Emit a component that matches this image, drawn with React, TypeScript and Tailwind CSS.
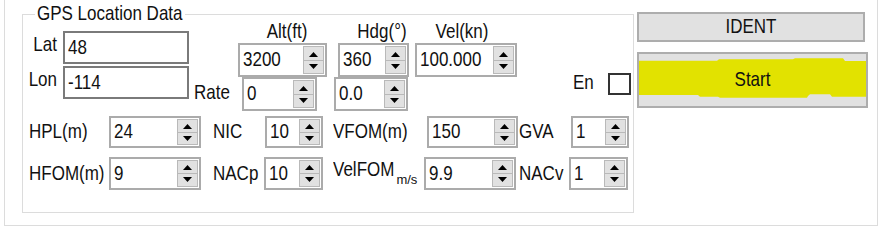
import React from 'react';

function T({ children }: { children: React.ReactNode }) {
  return <span className="inline-block scale-y-115 whitespace-nowrap">{children}</span>;
}

function Arrow({ up }: { up?: boolean }) {
  return (
    <svg width="9" height="5" viewBox="0 0 9 5" className="block">
      <polygon points={up ? '4.5,0 9,5 0,5' : '0,0 9,0 4.5,5'} fill="#000" />
    </svg>
  );
}

function Spin({ value, className }: { value: string; className: string }) {
  return (
    <div className={`flex shrink-0 border-2 border-[#ababab] bg-white p-px ${className}`}>
      <div className="flex flex-1 items-center overflow-hidden pl-[2px]">
        <T>{value}</T>
      </div>
      <div className="flex w-[21px] flex-col">
        <div className="flex flex-1 items-end justify-center border border-[#b9b9b9] bg-[#e1e1e1] pb-[3px]">
          <Arrow up />
        </div>
        <div className="flex flex-1 items-start justify-center border border-t-0 border-[#b9b9b9] bg-[#e1e1e1] pt-[3px]">
          <Arrow />
        </div>
      </div>
    </div>
  );
}

function Label({ children, className }: { children: React.ReactNode; className: string }) {
  return (
    <div className={`shrink-0 ${className}`}>
      <T>{children}</T>
    </div>
  );
}

export default function App() {
  return (
    <div className="h-[227px] w-[878px] overflow-hidden bg-white font-['Liberation_Sans',Arial,sans-serif] text-[17px] leading-[18px] text-[#111]">
      <div className="ml-[4px] flex h-[226px] w-[874px] border-x border-b border-[#dcdcdc]">
        {/* GPS group box */}
        <div className="relative ml-[17px] mt-[14px] h-[199px] w-[612px] shrink-0 border border-[#dcdcdc]">
          <div className="absolute -top-[11px] left-[12px] bg-white px-[2px] leading-[20px]">
            <T>GPS Location Data</T>
          </div>

          <div className="flex">
            {/* Lat / Lon */}
            <div className="ml-[2px] mt-[16px] flex w-[164px] flex-col gap-[2px]">
              <div className="flex items-center justify-end">
                <div className="mb-[5px]">
                  <T>Lat</T>
                </div>
                <div className="ml-[6px] flex h-[33px] w-[126px] items-center border-2 border-[#7a7a7a] pl-[3px]">
                  <T>48</T>
                </div>
              </div>
              <div className="flex items-center justify-end">
                <div className="mb-[5px]">
                  <T>Lon</T>
                </div>
                <div className="ml-[6px] flex h-[33px] w-[126px] items-center border-2 border-[#7a7a7a] pl-[3px]">
                  <T>-114</T>
                </div>
              </div>
            </div>

            {/* Alt / Hdg / Vel */}
            <div className="ml-[3px] flex flex-col">
              <div className="mt-[8px] flex h-[18px]">
                <Label className="ml-[60px] w-[70px] text-center">Alt(ft)</Label>
                <Label className="ml-[25px] w-[70px] text-center">Hdg(°)</Label>
                <Label className="ml-[10px] w-[70px] text-center">Vel(kn)</Label>
              </div>
              <div className="mt-[2px] flex">
                <Spin value="3200" className="ml-[46px] h-[34px] w-[89px]" />
                <Spin value="360" className="ml-[11px] h-[34px] w-[71px]" />
                <Spin value="100.000" className="ml-[6px] h-[34px] w-[102px]" />
              </div>
              <div className="flex items-start">
                <Label className="ml-[2px] mt-[7px] w-[48px]">Rate</Label>
                <Spin value="0" className="h-[34px] w-[75px]" />
                <Spin value="0.0" className="ml-[17px] h-[34px] w-[74px]" />
                <Label className="-mt-[3px] ml-[165px] w-[35px]">En</Label>
                <div className="-mt-[4px] h-[22px] w-[23px] shrink-0 border-2 border-[#333]" />
              </div>
            </div>
          </div>

          {/* HPL / NIC / VFOM / GVA */}
          <div className="mt-[5px] flex h-[32px] items-center">
            <Label className="ml-[6px] w-[80px]">HPL(m)</Label>
            <Spin value="24" className="h-[32px] w-[92px]" />
            <Label className="ml-[12px] w-[52px]">NIC</Label>
            <Spin value="10" className="h-[32px] w-[58px]" />
            <Label className="ml-[10px] w-[94px]">VFOM(m)</Label>
            <Spin value="150" className="h-[32px] w-[91px]" />
            <Label className="ml-[1px] w-[52px]">GVA</Label>
            <Spin value="1" className="h-[32px] w-[58px]" />
          </div>

          {/* HFOM / NACp / VelFOM / NACv */}
          <div className="mt-[9px] flex h-[33px] items-center">
            <Label className="ml-[6px] w-[80px]">HFOM(m)</Label>
            <Spin value="9" className="h-[33px] w-[92px]" />
            <Label className="ml-[12px] w-[51px]">NACp</Label>
            <Spin value="10" className="h-[33px] w-[59px]" />
            <div className="ml-[10px] w-[91px] shrink-0 whitespace-nowrap">
              <T>VelFOM</T>
              <span className="ml-[2px] inline-block align-[-9px] text-[13px] leading-[13px]">m/s</span>
            </div>
            <Spin value="9.9" className="h-[33px] w-[92px]" />
            <Label className="ml-[3px] w-[50px]">NACv</Label>
            <Spin value="1" className="h-[33px] w-[59px]" />
          </div>
        </div>

        {/* Buttons */}
        <div className="ml-[3px] mt-[12px] flex flex-col">
          <div className="flex h-[30px] w-[228px] items-center justify-center border-2 border-[#adadad] bg-[#e1e1e1]">
            <T>IDENT</T>
          </div>
          <div className="relative mt-[10px] flex h-[56px] w-[231px] items-center justify-center border-2 border-[#adadad] bg-[#e1e1e1]">
            <svg className="absolute left-0 top-0" width="227" height="52" viewBox="0 0 227 52">
              <polygon
                fill="#e2e200"
                points="0,6.7 78,6.7 80,5.3 154,5.3 156,4.3 204,4.3 206,7 227,7 227,42.7 193,42.7 191,40.3 171,40.3 169,42 168,43.7 81,43.7 79,42.7 61,42.7 59,41 0,41"
              />
            </svg>
            <span className="relative">
              <T>Start</T>
            </span>
          </div>
        </div>
      </div>
    </div>
  );
}
